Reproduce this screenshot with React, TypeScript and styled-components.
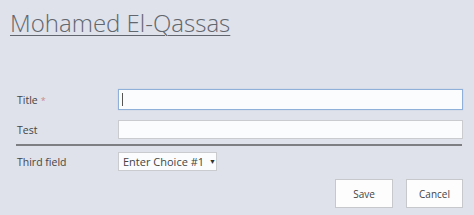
import React from "react";
import styled, { createGlobalStyle } from "styled-components";

const Global = createGlobalStyle`
  html, body { margin: 0; padding: 0; background: #dfe2ea; }
  * { box-sizing: border-box; }
`;

const Page = styled.div`
  width: 474px;
  height: 215px;
  background: #dfe2ea;
  padding: 6px 11px 0 10px;
  font-family: "Open Sans", "Noto Sans", sans-serif;
  color: #444;
`;

const Heading = styled.h1`
  margin: 0;
  font-family: "Open Sans", "Noto Sans", sans-serif;
  font-weight: 300;
  font-size: 24px;
  line-height: 34px;
  color: #62666e;
  text-decoration: underline;
  text-decoration-thickness: 1px;
  text-underline-offset: 3px;
  letter-spacing: 0;
`;

const Form = styled.div`
  margin-top: 49px;
  display: flex;
  flex-direction: column;
`;

const Row = styled.div<{ $gap?: number }>`
  display: grid;
  grid-template-columns: 101px 345px;
  align-items: center;
  padding-left: 7px;
  margin-top: ${(p) => p.$gap ?? 0}px;
`;

const Label = styled.div`
  font-size: 10.5px;
  color: #444;
`;

const Star = styled.span`
  color: #c98a90;
  margin-left: 3px;
  font-size: 9px;
`;

const Input = styled.div<{ $focused?: boolean; $h: number }>`
  height: ${(p) => p.$h}px;
  background: #fbfcfd;
  border: 1px solid ${(p) => (p.$focused ? "#8fb0d8" : "#c9cbcf")};
  box-shadow: ${(p) => (p.$focused ? "0 0 1px #a9c3e6" : "none")};
  position: relative;
`;

const Caret = styled.span`
  position: absolute;
  left: 3px;
  top: 3px;
  width: 1px;
  height: 13px;
  background: #555;
`;

const Separator = styled.div`
  height: 2px;
  background: #7d7f83;
  margin: 5px 1px 0 6px;
`;

const Select = styled.div`
  width: 99px;
  height: 19px;
  background: #fbfcfd;
  border: 1px solid #c9cbcf;
  font-size: 11px;
  color: #444;
  display: flex;
  align-items: center;
  padding-left: 4px;
  gap: 5px;
  white-space: nowrap;
`;

const Arrow = styled.span`
  font-size: 7px;
  color: #333;
`;

const Actions = styled.div`
  display: flex;
  justify-content: flex-end;
  gap: 13px;
  margin-top: 8px;
`;

const Button = styled.button<{ $w: number }>`
  width: ${(p) => p.$w}px;
  height: 29px;
  background: #fdfdfd;
  border: 1px solid #c6c8cc;
  font-family: "Open Sans", "Noto Sans", sans-serif;
  font-size: 10px;
  color: #444;
  padding: 0;
`;

export default function App() {
  return (
    <>
      <Global />
      <Page>
        <Heading>Mohamed El-Qassas</Heading>
        <Form>
          <Row>
            <Label>
              Title<Star>*</Star>
            </Label>
            <Input $focused $h={21}>
              <Caret />
            </Input>
          </Row>
          <Row $gap={10}>
            <Label>Test</Label>
            <Input $h={19} />
          </Row>
          <Separator />
          <Row $gap={6}>
            <Label>Third field</Label>
            <Select>
              <span>Enter Choice #1</span>
              <Arrow>▼</Arrow>
            </Select>
          </Row>
          <Actions>
            <Button $w={58}>Save</Button>
            <Button $w={57}>Cancel</Button>
          </Actions>
        </Form>
      </Page>
    </>
  );
}
